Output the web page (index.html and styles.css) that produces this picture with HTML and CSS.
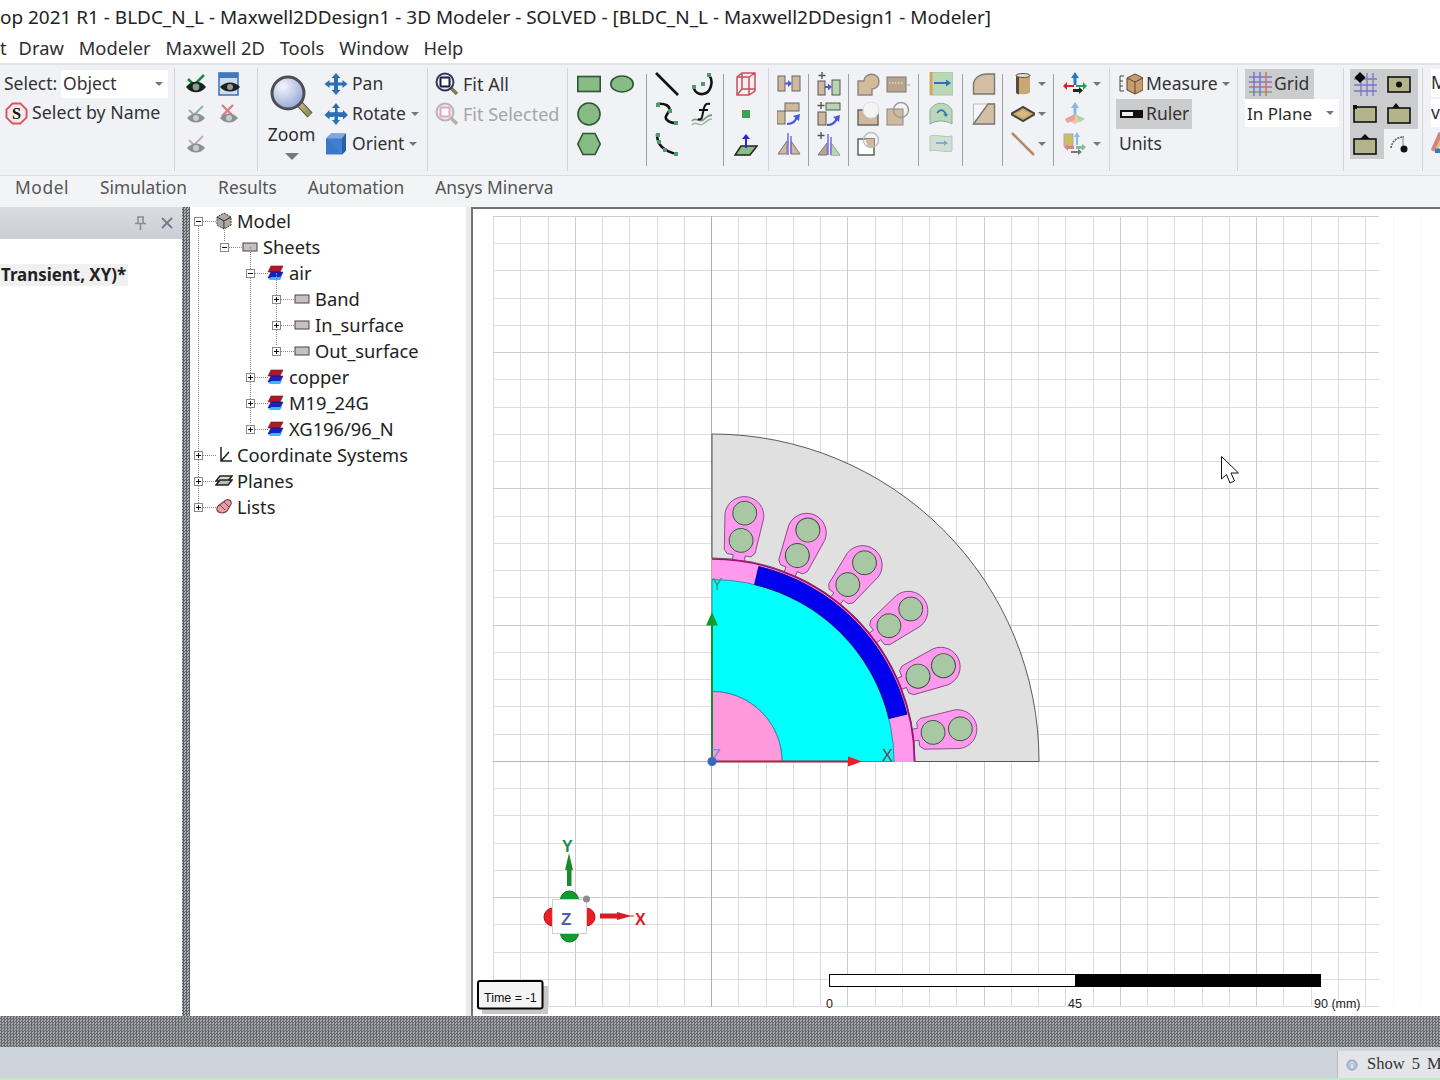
FILE: index.html
```html
<!DOCTYPE html>
<html lang="en">
<head>
<meta charset="utf-8">
<title>Maxwell 2D Modeler</title>
<link rel="stylesheet" href="styles.css">
</head>
<body>
<svg class="defs" width="0" height="0" aria-hidden="true">
  <defs>
    <radialGradient id="lens" cx="35%" cy="30%" r="80%"><stop offset="0" stop-color="#f4f6fc"/><stop offset="1" stop-color="#8f9fd0"/></radialGradient>
    <linearGradient id="gold" x1="0" y1="0" x2="1" y2="1"><stop offset="0" stop-color="#d8d08a"/><stop offset="1" stop-color="#8c8a48"/></linearGradient>
    <symbol id="eye-check" viewBox="0 0 24 24"><path d="M4 7l6 6 10-10" fill="none" stroke="#1f8a45" stroke-width="2.6"/><path d="M2 15c5-7 15-7 20 0-5 7-15 7-20 0z" fill="#16251c"/><circle cx="12" cy="15" r="3.4" fill="#8a9a90"/></symbol>
    <symbol id="eye-check-g" viewBox="0 0 24 24"><path d="M5 8l5 5 9-9" fill="none" stroke="#8cb89a" stroke-width="2"/><path d="M3 16c5-6 13-6 18 0-5 6-13 6-18 0z" fill="#8c9090"/><circle cx="12" cy="16" r="3" fill="#c8cccc"/></symbol>
    <symbol id="eye-check-p" viewBox="0 0 24 24"><path d="M5 8l5 5 9-9" fill="none" stroke="#c8a8c8" stroke-width="2"/><path d="M3 16c5-6 13-6 18 0-5 6-13 6-18 0z" fill="#8c9090"/><circle cx="12" cy="16" r="3" fill="#c8cccc"/></symbol>
    <symbol id="eye-x" viewBox="0 0 24 24"><path d="M5 3l11 11M16 3L5 14" fill="none" stroke="#e07c84" stroke-width="2.4"/><path d="M3 16c5-6 13-6 18 0-5 6-13 6-18 0z" fill="#8c9090"/><circle cx="12" cy="16" r="3" fill="#c8cccc"/></symbol>
    <symbol id="eye-win" viewBox="0 0 24 24"><rect x="2" y="1" width="19" height="22" fill="#d0dcec" stroke="#3f79b8" stroke-width="1.6"/><rect x="2" y="1" width="19" height="5" fill="#3f79b8"/><path d="M3 15c5-6 15-6 20 0-5 6-15 6-20 0z" fill="#1b2120"/><circle cx="13" cy="15" r="3" fill="#999"/></symbol>

    <symbol id="stop-s" viewBox="0 0 24 24"><path d="M8 1.500h8l6.500 6.500v8l-6.500 6.500h-8l-6.500-6.500v-8z" fill="#fbeaea" stroke="#d8545c" stroke-width="2"/><text x="12" y="18" class="s-letter">S</text></symbol>

    <symbol id="pan" viewBox="0 0 24 24"><path d="M12 1l4.500 5H14v4.500h4.500V8l5 4-5 4v-2.500H14V18h2.500L12 23l-4.500-5H10v-4.500H5.500V16l-5-4 5-4v2.500H10V6H7.500z" fill="#2c6fb5"/></symbol>
    <symbol id="rotate" viewBox="0 0 24 24"><path d="M12 1l4 5h-2.500v4c2 .3 4 .6 5.500 0V8l5 5-5 4.500V15c-2 .2-3.500 0-5-.5V18H16l-4 5-4-5h2.500v-3.500c-1.500.5-3 .7-5 .5v2.500l-5-4.500 5-5v2c1.500.6 3.500.3 5.500 0V6H8z" fill="#2c6fb5"/></symbol>
    <symbol id="orient" viewBox="0 0 24 24"><path d="M7 1.500h15v17l-4 4H2v-16z" fill="#3a78c8"/><path d="M2 6.500h16v16" fill="#3f7ed0"/><path d="M7 1.500h15L18 6.500H2z" fill="#7fa9de"/><path d="M22 1.500v17l-4 4v-16z" fill="#2a5fa6"/></symbol>

    <symbol id="fit-all" viewBox="0 0 24 24"><path d="M15 15l7 7" stroke="#7f7d55" stroke-width="3.5"/><circle cx="10" cy="10" r="8.500" fill="#e6e8f2" stroke="#35395a" stroke-width="2"/><rect x="5.500" y="5.500" width="9" height="9" rx="1" fill="#fff" stroke="#1c2040" stroke-width="2"/></symbol>
    <symbol id="fit-sel" viewBox="0 0 24 24"><path d="M15 15l7 7" stroke="#b4b4a4" stroke-width="3.5"/><circle cx="10" cy="10" r="8.500" fill="#ecebf0" stroke="#b6b2c0" stroke-width="2"/><rect x="5.500" y="5.500" width="9" height="9" rx="1" fill="#fff" stroke="#e6a8ac" stroke-width="2"/></symbol>

    <symbol id="s-rect" viewBox="0 0 24 24"><rect x=".8" y="4.500" width="22.400" height="15" fill="#87bd85" stroke="#2d5638" stroke-width="1.600"/></symbol>
    <symbol id="s-ellipse" viewBox="0 0 24 24"><ellipse cx="12" cy="12" rx="11.200" ry="8" fill="#87bd85" stroke="#2d5638" stroke-width="1.600"/></symbol>
    <symbol id="s-circle" viewBox="0 0 24 24"><circle cx="12" cy="12" r="11" fill="#87bd85" stroke="#2d5638" stroke-width="1.600"/></symbol>
    <symbol id="s-hex" viewBox="0 0 24 24"><path d="M6 1.500h12l5.200 10.500L18 22.500H6L.8 12z" fill="#87bd85" stroke="#2d5638" stroke-width="1.600"/></symbol>

    <symbol id="d-line" viewBox="0 0 24 24"><path d="M1 1l22 22" stroke="#111" stroke-width="2.600"/></symbol>
    <symbol id="d-arc" viewBox="0 0 24 24"><path d="M19 3c5 6 2 18-6 19-4 .5-7-1-9-5" fill="none" stroke="#111" stroke-width="2.600"/><rect x="17" y="1" width="4" height="4" fill="#4d9a6a"/><rect x="11" y="10" width="4" height="4" fill="#4d9a6a"/><rect x="2" y="13" width="4" height="4" fill="#4d9a6a"/></symbol>
    <symbol id="d-spline" viewBox="0 0 24 24"><path d="M2 2c8-1 14 2 12 7-2 4-5 6-2 9 2 2 5 3 9 3" fill="none" stroke="#111" stroke-width="2.600"/><rect x="1" y="1" width="4" height="4" fill="#4d9a6a"/><rect x="13" y="7" width="4" height="4" fill="#4d9a6a"/><rect x="19" y="19" width="4" height="4" fill="#4d9a6a"/></symbol>
    <symbol id="d-func" viewBox="0 0 24 24"><path d="M2 19c4-5 7 2 11-1s5-5 9-5" fill="none" stroke="#7a9a86" stroke-width="1.800"/><path d="M2 23c4-5 7 2 11-1s5-5 9-5" fill="none" stroke="#9ab8a6" stroke-width="1.500"/><path d="M20 2c-3-1-5 0-6 4l-2 9c-.5 2-2 3-4 2M9 8h9" fill="none" stroke="#111" stroke-width="2"/></symbol>
    <symbol id="d-curve" viewBox="0 0 24 24"><path d="M2 2c0 8 4 17 20 20" fill="none" stroke="#111" stroke-width="2.600"/><rect x="1" y="1" width="4" height="4" fill="#4d9a6a"/><rect x="2" y="8" width="4" height="4" fill="#4d9a6a"/><rect x="8" y="16" width="4" height="4" fill="#4d9a6a"/><rect x="19" y="20" width="4" height="4" fill="#4d9a6a"/></symbol>

    <symbol id="d-box" viewBox="0 0 24 24"><path d="M8 1h13v18l-6 4H3V5zM3 5h12v18M15 5l6-4M8 1v16L3 23M8 17h13" fill="#f8e8ea" fill-opacity=".4" stroke="#c8505c" stroke-width="1.500"/></symbol>
    <symbol id="d-point" viewBox="0 0 24 24"><rect x="8" y="8" width="8" height="8" fill="#3fa050"/></symbol>
    <symbol id="d-plane" viewBox="0 0 24 24"><path d="M7 14h16l-7 9H1z" fill="#87bd85" stroke="#222" stroke-width="1.500"/><path d="M12 16V5" stroke="#2a2ad0" stroke-width="2"/><path d="M8 7l4-5 4 5z" fill="#2a2ad0"/></symbol>

    <symbol id="o-move" viewBox="0 0 24 24"><rect x="1" y="4" width="7" height="15" fill="#cfb99c" stroke="#666"/><rect x="15" y="4" width="8" height="15" fill="#cfb99c" stroke="#666"/><path d="M8 10.500h3V8l4 3.500L11 15v-2.500H8z" fill="#4a58dc"/></symbol>
    <symbol id="o-rot" viewBox="0 0 24 24"><rect x="0" y="9" width="8" height="13" fill="#cfb99c" stroke="#666"/><rect x="8" y="1" width="14" height="8" fill="#cfb99c" stroke="#666"/><path d="M10 22c6 0 9-3 10-8" fill="none" stroke="#4a58dc" stroke-width="2.200"/><path d="M16 14l7-2-1 7z" fill="#4a58dc"/></symbol>
    <symbol id="o-mir" viewBox="0 0 24 24"><path d="M10 22H1l9-13zM14 22h9l-9-13z" fill="#cfb99c" stroke="#777"/><path d="M11 1v22M14 4v18" stroke="#7d6ce0" stroke-width="1.500"/></symbol>
    <symbol id="o-move2" viewBox="0 0 24 24"><path d="M5 0v7M1.500 3.500h7" stroke="#555" stroke-width="1.400"/><rect x="1" y="9" width="7" height="14" fill="#cfb99c" stroke="#555"/><rect x="15" y="8" width="8" height="15" fill="#b5d6b0" stroke="#555"/><path d="M8 14h3v-2.500l4 3.500-4 3.500V16H8z" fill="#4a58dc"/></symbol>
    <symbol id="o-rot2" viewBox="0 0 24 24"><path d="M4 0v7M.500 3.500h7" stroke="#555" stroke-width="1.400"/><rect x="1" y="10" width="8" height="13" fill="#cfb99c" stroke="#555"/><rect x="9" y="1" width="14" height="7" fill="#b5d6b0" stroke="#555"/><path d="M10 23c6 0 9-3 10-8" fill="none" stroke="#4a58dc" stroke-width="2.200"/><path d="M16 15l7-2-1 7z" fill="#4a58dc"/></symbol>
    <symbol id="o-mir2" viewBox="0 0 24 24"><path d="M4 0v7M.500 3.500h7" stroke="#555" stroke-width="1.400"/><path d="M10 23H1l9-12zM14 23h9l-9-12z" fill="#b5a995" stroke="#777"/><path d="M14 23h9l-9-12z" fill="#b5d6b0"/><path d="M11 2v21M14 5v18" stroke="#7d6ce0" stroke-width="1.500"/></symbol>

    <symbol id="b-union" viewBox="0 0 24 24"><path d="M2 9h6c0-9 15-9 15 0 0 5-3 8-7 8v6H2z" fill="#d4b99a" stroke="#888" stroke-width="1.400"/></symbol>
    <symbol id="b-imprint" viewBox="0 0 24 24"><rect x="1" y="5" width="19" height="15" fill="#b8a48c" stroke="#777"/><path d="M3 11h15" stroke="#eee" stroke-dasharray="1.500 1.500"/><path d="M20 13h4" stroke="#aaa"/></symbol>
    <symbol id="b-sub" viewBox="0 0 24 24"><path d="M2 8h20v15H2z" fill="#cfb99c" stroke="#666" stroke-width="1.400"/><circle cx="15" cy="8" r="8" fill="#f4f4f4" stroke="#ddd"/></symbol>
    <symbol id="b-int" viewBox="0 0 24 24"><rect x="1" y="7" width="16" height="16" fill="#cfb99c" stroke="#888"/><circle cx="15" cy="8" r="7.500" fill="none" stroke="#999" stroke-width="1.400"/></symbol>
    <symbol id="b-int2" viewBox="0 0 24 24"><rect x="2" y="7" width="16" height="16" fill="#fff" stroke="#555" stroke-width="1.400"/><path d="M9 7h9v8h-6z" fill="#cfb99c"/><circle cx="15" cy="8" r="7.500" fill="none" stroke="#bbb" stroke-width="1.400"/></symbol>

    <symbol id="t-flat" viewBox="0 0 24 24"><rect x="1" y="0" width="23" height="23" fill="#b9d8b5" stroke="#a8c0a8"/><rect x="1" y="0" width="2.500" height="23" fill="#e29c5c"/><path d="M5 11h13" stroke="#2e6ec0" stroke-width="2"/><path d="M17 7.500l5 3.500-5 3.500z" fill="#2e6ec0"/></symbol>
    <symbol id="t-arch" viewBox="0 0 24 24"><path d="M1 22V8c5-9 17-9 22 0v14c-6-4-16-4-22 0z" fill="#b9d8b5" stroke="#8aa8a0"/><path d="M8 11c3-4 6-4 9 1" fill="none" stroke="#3e6ec0" stroke-width="1.600"/><path d="M14 12h5l-2 3z" fill="#3e6ec0"/></symbol>
    <symbol id="t-wave" viewBox="0 0 24 24"><path d="M1 4c7-2 15 2 22 0v15c-7 2-15-2-22 0z" fill="#cfe0d0" stroke="#b4c4c4"/><path d="M7 11h9" stroke="#7f9fd0" stroke-width="1.600"/><path d="M15 8.500l4 2.500-4 2.500z" fill="#7f9fd0"/></symbol>

    <symbol id="f-fillet" viewBox="0 0 24 24"><path d="M1.500 22V12C2 6 8 2 14 2h8.500v20z" fill="#d4bfa4" stroke="#777" stroke-width="1.400"/></symbol>
    <symbol id="f-chamfer" viewBox="0 0 24 24"><rect x="1.500" y="2" width="21" height="20" fill="#f6f6f6" stroke="#bbb"/><path d="M1.500 22L16 2h6.500v20z" fill="#d4bfa4" stroke="#777" stroke-width="1.400"/></symbol>

    <symbol id="c-cyl" viewBox="0 0 24 24"><path d="M5 3v17c0 3 14 3 14 0V3z" fill="#c9a878"/><path d="M5 3v17c0 1.500 2 2.500 3 2.500V3z" fill="#5a4a38"/><ellipse cx="12" cy="3.500" rx="7" ry="2" fill="#e8dcc4" stroke="#555"/></symbol>
    <symbol id="c-dia" viewBox="0 0 24 24"><path d="M0 12l12-7 12 7-12 7z" fill="#c8a860" stroke="#444" stroke-width="2"/><path d="M5 12l7-4 7 4-7 4z" fill="#d8b880"/></symbol>
    <symbol id="c-line" viewBox="0 0 24 24"><path d="M1 1l22 22" stroke="#b08c70" stroke-width="2.600"/></symbol>

    <symbol id="a-tri" viewBox="0 0 24 24"><path d="M12 0l4 6h-2.500v7h-3V6H8z" fill="#2c78c8"/><path d="M11 13H4V10L0 14l4 4v-3h7z" fill="#d8202c"/><path d="M13 13h7v-3l4 4-4 4v-3h-7z" fill="#20a050"/><path d="M10 17h6v-2l4 3.500-4 3.500v-2h-6z" fill="#222"/></symbol>
    <symbol id="a-tri2" viewBox="0 0 24 24"><path d="M12 0l4 6h-2.500v9h-3V6H8z" fill="#8cb8e8"/><path d="M2 17l10-5 10 5-10 5z" fill="#e8c8a8"/><path d="M2 17l10-5v6l-8 3z" fill="#e8a0a0"/><path d="M12 12l10 5-5 3z" fill="#a8d8a8"/></symbol>
    <symbol id="a-tri3" viewBox="0 0 24 24"><rect x="1" y="2" width="9" height="12" fill="#c8c060" stroke="#aaa"/><path d="M14 0l3 5h-2v8h-2V5h-2z" fill="#8cb8e8"/><path d="M11 14H5v-2l-4 3 4 4v-2h6z" fill="#e08088"/><path d="M13 14h6v-2l4 3-4 4v-2h-6z" fill="#80c098"/><path d="M8 19h7v-2l4 3-4 3v-2H8z" fill="#777"/></symbol>

    <symbol id="m-box" viewBox="0 0 24 24"><path d="M8 6l8-4 8 4v12l-8 4-8-4z" fill="#c89c6c" stroke="#5a4430"/><path d="M8 6l8 4 8-4M16 10v12" fill="none" stroke="#5a4430"/><path d="M1 4h4M1 9h3M1 14h3M1 19h4M1 4v15" stroke="#444" fill="none"/></symbol>
    <symbol id="m-ruler" viewBox="0 0 24 24"><rect x="1" y="8" width="23" height="8" fill="#111"/><rect x="3" y="10" width="11" height="4" fill="#eee"/></symbol>
    <symbol id="g-grid" viewBox="0 0 24 24"><path d="M1 5h23M1 10h23" stroke="#7a74d0" stroke-width="1.500"/><path d="M1 15h23" stroke="#c06a8a" stroke-width="1.500"/><path d="M1 20h23" stroke="#72a878" stroke-width="1.500"/><path d="M6 0v24M12 0v24" stroke="#7a74d0" stroke-width="1.500"/><path d="M18 0v24" stroke="#d07060" stroke-width="1.500"/></symbol>
    <symbol id="g-snap" viewBox="0 0 24 24"><path d="M1 7h23M1 13h23M1 19h23M8 1v23M14 1v23M20 1v23" stroke="#7a74c8" stroke-width="1.300"/><path d="M7 0l5.500 5.500L7 11 1.500 5.500z" fill="#000"/></symbol>
    <symbol id="k-dot" viewBox="0 0 24 24"><rect x="1" y="5" width="22" height="15" fill="#b4b48c" stroke="#111" stroke-width="1.600"/><circle cx="12" cy="12.500" r="3" fill="#111"/></symbol>
    <symbol id="k-tl" viewBox="0 0 24 24"><rect x="1" y="5" width="22" height="15" fill="#b4b48c" stroke="#111" stroke-width="1.600"/><rect x="0" y="3" width="4" height="4" fill="#111"/></symbol>
    <symbol id="k-tm" viewBox="0 0 24 24"><rect x="1" y="6" width="22" height="15" fill="#b4b48c" stroke="#111" stroke-width="1.600"/><path d="M5 6l4-5 4 5z" fill="#111"/></symbol>
    <symbol id="k-tc" viewBox="0 0 24 24"><rect x="1" y="7" width="22" height="15" fill="#b4b48c" stroke="#111" stroke-width="1.600"/><path d="M7 7l5-5 5 5z" fill="#111"/></symbol>
    <symbol id="k-arc" viewBox="0 0 24 24"><path d="M4 16C5 9 10 5 17 5" fill="none" stroke="#555" stroke-width="1.500" stroke-dasharray="2 1"/><path d="M16 4v12" stroke="#888"/><circle cx="17" cy="17" r="3.500" fill="#111"/></symbol>
    <symbol id="k-rain" viewBox="0 0 24 24"><path d="M2 22L10 4" stroke="#d88080" stroke-width="5"/><path d="M4 23L13 6" stroke="#e0c070" stroke-width="3"/><path d="M4 22h20" stroke="#3a78c8" stroke-width="5"/></symbol>

    <symbol id="n-model" viewBox="0 0 18 18"><path d="M9 1l7 4v8l-7 4-7-4V5z" fill="#b0aaa6" stroke="#333" stroke-dasharray="2 1"/><path d="M2 5l7 4 7-4M9 9v8" stroke="#222" fill="none"/></symbol>
    <symbol id="n-sheet" viewBox="0 0 18 18"><rect x="2" y="5" width="14" height="8" fill="#c8c0c0" stroke="#444"/></symbol>
    <symbol id="n-mat" viewBox="0 0 18 18"><path d="M4 2h12l-3 6H1z" fill="#b01828" stroke="#701020" stroke-width=".6"/><path d="M4 8h12l-3 6H1z" fill="#1c20c0" stroke="#101070" stroke-width=".6"/><path d="M4 13h11l-2 3H2z" fill="#30c0f0"/></symbol>
    <symbol id="n-cs" viewBox="0 0 18 18"><path d="M6 1v14h11M6 15L14 6" fill="none" stroke="#222" stroke-width="1.500"/></symbol>
    <symbol id="n-plane" viewBox="0 0 18 18"><path d="M5 4h12l-4 5H1z" fill="#ddd" stroke="#222" stroke-width="1.500"/><path d="M5 8h12l-4 5H1z" fill="#bbb" stroke="#222" stroke-width="1.500"/></symbol>
    <symbol id="n-list" viewBox="0 0 18 18"><path d="M11 2c3-1 6 1 5 4l-4 7c-3 3-9 2-10-1-.5-2 .5-3 1-4z" fill="#e2a0a8" stroke="#8a4048" stroke-width="1.200"/><path d="M5 7l5 5M9 4l5 5" stroke="#8a4048"/></symbol>

    <g id="slot">
      <path d="M203 -6L208 -6L208 -12L212 -15.500L247.500 -19.500A19.500 19.500 0 0 1 247.500 19.500L212 15.500L208 12L208 6L203 6Z" fill="#ff99ee" stroke="#7a3a80" stroke-width=".8"/>
      <circle cx="223" cy="0" r="12" fill="#a8c8a4" stroke="#3c4a44" stroke-width=".9"/>
      <circle cx="250.500" cy="0" r="12" fill="#a8c8a4" stroke="#3c4a44" stroke-width=".9"/>
    </g>
  </defs>
</svg>

<header class="titlebar"><span class="title-text">op 2021 R1 - BLDC_N_L - Maxwell2DDesign1 - 3D Modeler - SOLVED - [BLDC_N_L - Maxwell2DDesign1 - Modeler]</span></header>
<nav class="menubar"><span class="menu-first">t</span><span>Draw</span><span>Modeler</span><span>Maxwell 2D</span><span>Tools</span><span>Window</span><span>Help</span></nav>

<section class="ribbon">
  <div class="grp g1">
    <div class="cmd"><span class="sel-label">Select:</span><div class="combo c-object">Object<b class="caret"></b></div></div>
    <div class="cmd by-name"><svg class="ic ic22"><use href="#stop-s"/></svg>Select by Name</div>
  </div>
  <i class="sep"></i>
  <div class="grp g2 icons c2">
    <svg class="ic"><use href="#eye-check"/></svg><svg class="ic"><use href="#eye-win"/></svg>
    <svg class="ic"><use href="#eye-check-g"/></svg><svg class="ic"><use href="#eye-x"/></svg>
    <svg class="ic"><use href="#eye-check-p"/></svg>
  </div>
  <i class="sep"></i>
  <div class="grp g3">
    <div class="zoom">
      <svg class="zoom-ic" viewBox="0 0 46 50"><path d="M26 27l15 16" stroke="#555" stroke-width="7"/><path d="M26 27l15 16" stroke="url(#gold)" stroke-width="5"/><circle cx="19" cy="21" r="16" fill="url(#lens)" stroke="#4a4e58" stroke-width="3"/></svg>
      <span>Zoom</span><b class="caret big"></b>
    </div>
    <div class="stack">
      <div class="cmd"><svg class="ic"><use href="#pan"/></svg>Pan</div>
      <div class="cmd"><svg class="ic"><use href="#rotate"/></svg>Rotate<b class="caret tight"></b></div>
      <div class="cmd"><svg class="ic"><use href="#orient"/></svg>Orient<b class="caret tight"></b></div>
    </div>
  </div>
  <i class="sep"></i>
  <div class="grp g4 stack">
    <div class="cmd"><svg class="ic"><use href="#fit-all"/></svg>Fit All</div>
    <div class="cmd dim"><svg class="ic"><use href="#fit-sel"/></svg>Fit Selected</div>
  </div>
  <i class="sep"></i>
  <div class="grp g5 icons c2">
    <svg class="ic"><use href="#s-rect"/></svg><svg class="ic"><use href="#s-ellipse"/></svg>
    <svg class="ic"><use href="#s-circle"/></svg><i></i>
    <svg class="ic"><use href="#s-hex"/></svg>
  </div>
  <i class="sep dark"></i>
  <div class="grp g6 icons c2">
    <svg class="ic"><use href="#d-line"/></svg><svg class="ic"><use href="#d-arc"/></svg>
    <svg class="ic"><use href="#d-spline"/></svg><svg class="ic"><use href="#d-func"/></svg>
    <svg class="ic"><use href="#d-curve"/></svg>
  </div>
  <i class="sep dark"></i>
  <div class="grp g7 icons">
    <svg class="ic"><use href="#d-box"/></svg><svg class="ic"><use href="#d-point"/></svg><svg class="ic"><use href="#d-plane"/></svg>
  </div>
  <i class="sep"></i>
  <div class="grp g8 icons">
    <svg class="ic"><use href="#o-move"/></svg><svg class="ic"><use href="#o-rot"/></svg><svg class="ic"><use href="#o-mir"/></svg>
  </div>
  <i class="sep dark"></i>
  <div class="grp g8 icons">
    <svg class="ic"><use href="#o-move2"/></svg><svg class="ic"><use href="#o-rot2"/></svg><svg class="ic"><use href="#o-mir2"/></svg>
  </div>
  <i class="sep dark"></i>
  <div class="grp g10 icons c2">
    <svg class="ic"><use href="#b-union"/></svg><svg class="ic"><use href="#b-imprint"/></svg>
    <svg class="ic"><use href="#b-sub"/></svg><svg class="ic"><use href="#b-int"/></svg>
    <svg class="ic"><use href="#b-int2"/></svg>
  </div>
  <i class="sep dark"></i>
  <div class="grp g11 icons">
    <svg class="ic"><use href="#t-flat"/></svg><svg class="ic"><use href="#t-arch"/></svg><svg class="ic"><use href="#t-wave"/></svg>
  </div>
  <i class="sep dark"></i>
  <div class="grp g12 icons">
    <svg class="ic"><use href="#f-fillet"/></svg><svg class="ic"><use href="#f-chamfer"/></svg>
  </div>
  <i class="sep dark"></i>
  <div class="grp g13 stack">
    <div class="cmd"><svg class="ic"><use href="#c-cyl"/></svg><b class="caret"></b></div>
    <div class="cmd"><svg class="ic"><use href="#c-dia"/></svg><b class="caret"></b></div>
    <div class="cmd"><svg class="ic"><use href="#c-line"/></svg><b class="caret"></b></div>
  </div>
  <i class="sep dark"></i>
  <div class="grp g14 stack">
    <div class="cmd"><svg class="ic"><use href="#a-tri"/></svg><b class="caret"></b></div>
    <div class="cmd"><svg class="ic"><use href="#a-tri2"/></svg></div>
    <div class="cmd"><svg class="ic"><use href="#a-tri3"/></svg><b class="caret"></b></div>
  </div>
  <i class="sep"></i>
  <div class="grp g15 stack">
    <div class="cmd"><svg class="ic"><use href="#m-box"/></svg>Measure<b class="caret tight"></b></div>
    <div class="cmd on ruler"><svg class="ic"><use href="#m-ruler"/></svg>Ruler</div>
    <div class="cmd units">Units</div>
  </div>
  <i class="sep"></i>
  <div class="grp g16 stack">
    <div class="cmd on grid-btn"><svg class="ic"><use href="#g-grid"/></svg>Grid</div>
    <div class="combo c-plane">In Plane<b class="caret"></b></div>
  </div>
  <i class="sep"></i>
  <div class="grp g17 icons c2">
    <span class="cell on"><svg class="ic"><use href="#g-snap"/></svg></span><span class="cell on"><svg class="ic"><use href="#k-dot"/></svg></span>
    <span class="cell on"><svg class="ic"><use href="#k-tl"/></svg></span><span class="cell on"><svg class="ic"><use href="#k-tm"/></svg></span>
    <span class="cell on"><svg class="ic"><use href="#k-tc"/></svg></span><span class="cell"><svg class="ic"><use href="#k-arc"/></svg></span>
  </div>
  <i class="sep"></i>
  <div class="grp g18">
    <div class="combo c-cut">M</div>
    <div class="combo c-cut">v</div>
    <svg class="ic"><use href="#k-rain"/></svg>
  </div>
</section>

<nav class="tabs"><span class="tab-first">Model</span><span>Simulation</span><span>Results</span><span>Automation</span><span>Ansys Minerva</span></nav>

<main class="work">
  <aside class="left">
    <div class="left-head">
      <svg class="pin" viewBox="0 0 14 14"><path d="M4 1h7M5 1v6M10 1v6M2 7.500h11M7.500 8v6" fill="none" stroke="#8a8f96" stroke-width="1.600"/></svg>
      <svg class="close" viewBox="0 0 14 14"><path d="M2 2l10 10M12 2L2 12" fill="none" stroke="#777c84" stroke-width="1.800"/></svg>
    </div>
    <div class="left-body"><span class="doc">Transient, XY)*</span></div>
  </aside>
  <div class="sash"></div>
  <div class="tree">
    <i class="vl vl0"></i><i class="vl vl1"></i><i class="vl vl2"></i><i class="vl vl3"></i>
    <div class="row l0"><b class="exp open"></b><i class="dash"></i><svg class="ni"><use href="#n-model"/></svg>Model</div>
    <div class="row l1"><b class="exp open"></b><i class="dash"></i><svg class="ni"><use href="#n-sheet"/></svg>Sheets</div>
    <div class="row l2"><b class="exp open"></b><i class="dash"></i><svg class="ni"><use href="#n-mat"/></svg>air</div>
    <div class="row l3"><b class="exp"></b><i class="dash"></i><svg class="ni"><use href="#n-sheet"/></svg>Band</div>
    <div class="row l3"><b class="exp"></b><i class="dash"></i><svg class="ni"><use href="#n-sheet"/></svg>In_surface</div>
    <div class="row l3"><b class="exp"></b><i class="dash"></i><svg class="ni"><use href="#n-sheet"/></svg>Out_surface</div>
    <div class="row l2"><b class="exp"></b><i class="dash"></i><svg class="ni"><use href="#n-mat"/></svg>copper</div>
    <div class="row l2"><b class="exp"></b><i class="dash"></i><svg class="ni"><use href="#n-mat"/></svg>M19_24G</div>
    <div class="row l2"><b class="exp"></b><i class="dash"></i><svg class="ni"><use href="#n-mat"/></svg>XG196/96_N</div>
    <div class="row l0"><b class="exp"></b><i class="dash"></i><svg class="ni"><use href="#n-cs"/></svg>Coordinate Systems</div>
    <div class="row l0"><b class="exp"></b><i class="dash"></i><svg class="ni"><use href="#n-plane"/></svg>Planes</div>
    <div class="row l0"><b class="exp"></b><i class="dash"></i><svg class="ni"><use href="#n-list"/></svg>Lists</div>
  </div>
  <div class="sash2"></div>
  <div class="view">
    <svg class="canvas" viewBox="471 207 969 809" width="969" height="809">
      <path class="grid-faint" d="M1393.500 216V1006M1420.500 216V1006"/>
      <path class="grid-minor" d="M493.500 216V1007M520.500 216V1007M548.500 216V1007M602.500 216V1007M629.500 216V1007M657.500 216V1007M684.500 216V1007M738.500 216V1007M766.500 216V1007M793.500 216V1007M820.500 216V1007M875.500 216V1007M902.500 216V1007M929.500 216V1007M956.500 216V1007M1011.500 216V1007M1038.500 216V1007M1065.500 216V1007M1093.500 216V1007M1147.500 216V1007M1174.500 216V1007M1202.500 216V1007M1229.500 216V1007M1283.500 216V1007M1311.500 216V1007M1338.500 216V1007M1365.500 216V1007
        M493 243.500H1379M493 270.500H1379M493 298.500H1379M493 325.500H1379M493 379.500H1379M493 407.500H1379M493 434.500H1379M493 461.500H1379M493 516.500H1379M493 543.500H1379M493 570.500H1379M493 597.500H1379M493 652.500H1379M493 679.500H1379M493 706.500H1379M493 734.500H1379M493 788.500H1379M493 815.500H1379M493 843.500H1379M493 870.500H1379M493 924.500H1379M493 952.500H1379M493 979.500H1379M493 1006.500H1379"/>
      <path class="grid-major" d="M575.500 216V1007M847.500 216V1007M984.500 216V1007M1120.500 216V1007M1256.500 216V1007M493 216.500H1379M493 352.500H1379M493 488.500H1379M493 625.500H1379M493 897.500H1379"/>
      <path class="grid-y" d="M711.500 216V1007"/>
      <path class="grid-x" d="M493 761.500H1379"/>

      <path class="stator" d="M712 434A327 327 0 0 1 1039 761.500L915 761.500A203 203 0 0 0 712 558Z"/>
      <g transform="translate(712 761.500)">
        <use href="#slot" transform="rotate(-7.500)"/>
        <use href="#slot" transform="rotate(-22.500)"/>
        <use href="#slot" transform="rotate(-37.500)"/>
        <use href="#slot" transform="rotate(-52.500)"/>
        <use href="#slot" transform="rotate(-67.500)"/>
        <use href="#slot" transform="rotate(-82.500)"/>
      </g>
      <path class="ring" d="M712 761.500V559A202.500 202.500 0 0 1 914.500 761.500Z"/>
      <path class="gap" d="M712 559A202.500 202.500 0 0 1 914.500 761.500"/>
      <path class="core" d="M782 761.500L894 761.500A182 182 0 0 0 712 579.500L712 691.500A70 70 0 0 1 782 761.500Z"/>
      <path class="shaft" d="M712 761.500L782 761.500A70 70 0 0 0 712 691.500Z"/>
      <path class="magnet" d="M889 718.500L907 714.200A200.500 200.500 0 0 0 758.800 566.500L754.500 584.500A182 182 0 0 1 889 718.500Z"/>

      <path class="ax-y" d="M712 761V624"/>
      <path class="ax-y-h" d="M712 612L706 625.500H718Z"/>
      <path class="ax-x" d="M712 761.500H850"/>
      <path class="ax-x-h" d="M848 756.500L862 761.500L848 766.500Z"/>
      <text class="lab lab-y" x="712" y="590">Y</text>
      <text class="lab lab-x" x="882" y="761">X</text>
      <text class="lab lab-z" x="711" y="761">Z</text>
      <circle class="origin" cx="712" cy="761.500" r="4.500"/>

      <circle class="tr-r" cx="553" cy="917" r="9"/><circle class="tr-r" cx="586" cy="917" r="9"/>
      <circle class="tr-g" cx="569.500" cy="900" r="9"/><circle class="tr-g" cx="569.500" cy="933" r="9"/>
      <rect class="tr-box" x="552.500" y="899.500" width="34" height="34"/>
      <circle class="tr-dot" cx="586.500" cy="899" r="3.500"/>
      <text class="tr-z" x="561" y="925">Z</text>
      <path class="tr-yarrow" d="M567 886V870H565L569 853L573 870H571.500V886Z"/>
      <text class="tr-y" x="562" y="852">Y</text>
      <path class="tr-xarrow" d="M600 913.500H617V912L630 915.500H634V916.500H630L617 920V918.500H600Z"/>
      <text class="tr-x" x="635" y="925">X</text>

      <rect class="time-sh" x="482" y="986" width="66" height="28"/>
      <rect class="time" x="478" y="981" width="64.500" height="27.500" rx="2"/>
      <text class="time-t" x="484" y="1002">Time = -1</text>

      <rect class="sc-w" x="829.500" y="974.500" width="246" height="12"/>
      <rect class="sc-b" x="1075" y="974" width="246" height="13"/>
      <text class="sc-t" x="826" y="1008">0</text>
      <text class="sc-t" x="1068" y="1008">45</text>
      <text class="sc-t" x="1314" y="1008">90 (mm)</text>

      <path class="cursor" d="M1221.500 456.500V479L1226.500 474.500L1230 483L1234.500 481L1231 473H1238.500Z"/>
    </svg>
  </div>
</main>

<div class="hatch"></div>
<footer class="status">
  <div class="show"><svg class="info" viewBox="0 0 12 12"><circle cx="6" cy="6" r="5" fill="#b4c4dc" stroke="#8a9ab8"/><path d="M6 3v1M6 5.500V9" stroke="#fff" stroke-width="1.400"/></svg><span>Show 5 M</span></div>
</footer>
</body>
</html>
```

FILE: styles.css
```css
* { box-sizing: border-box; }
html, body { margin: 0; padding: 0; }
body {
  width: 1440px;
  height: 1080px;
  overflow: hidden;
  background: #fff;
  color: #2b2b2b;
  font-family: "Noto Sans", "Liberation Sans", sans-serif;
  font-size: 17.5px;
  line-height: 1;
}
.defs { position: absolute; }
.s-letter { font: bold 17px "Liberation Serif", serif; text-anchor: middle; fill: #111; }

.titlebar { height: 32px; padding-top: 8px; white-space: nowrap; overflow: hidden; color: #222; font-size: 18.95px; }
.menubar { height: 33px; display: flex; gap: 15px; padding-top: 7px; color: #2e2e2e; font-size: 18.3px; border-bottom: 2px solid #e2e3e6; }
.menu-first { margin-right: -3px; }

.ribbon { height: 111px; padding-top: 4px; display: flex; background: #f1f2f5; border-bottom: 1px solid #dcdde0; }
.grp { flex: none; }
.sep { flex: none; width: 1px; margin: -1px 0 4px; background: #d4d5d8; }
.sep.dark { margin: 5px 0 9px; background: #9c9ea3; }

.cmd { height: 30px; display: flex; align-items: center; gap: 4px; white-space: nowrap; color: #333; }
.dim { color: #a3a5a9; }
.ic { width: 24px; height: 24px; flex: none; display: block; }
.ic22 { width: 23px; height: 23px; }
.caret { display: inline-block; width: 0; height: 0; border-left: 4px solid transparent; border-right: 4px solid transparent; border-top: 4px solid #777; }
.caret.tight { margin-left: 1px; }
.caret.big { border-left-width: 7px; border-right-width: 7px; border-top-width: 7px; margin-top: 9px; }

.combo { background: #fff; display: flex; align-items: center; justify-content: space-between; white-space: nowrap; overflow: hidden; }

.g1 { width: 174px; padding-left: 4px; }
.sel-label { width: 54px; }
.c-object { width: 107px; height: 28px; padding: 0 5px 0 2px; margin-left: -1px; }
.by-name { padding-left: 1px; gap: 4px; font-size: 17.8px; margin-top: -1px; }

.icons { display: grid; grid-template-rows: repeat(3, 30px); grid-auto-rows: 30px; grid-template-columns: 1fr; justify-items: center; align-items: center; align-content: start; }
.icons.c2 { grid-template-columns: 33px 33px; }

.g2 { width: 82px; padding-left: 4px; }
.g3 { width: 169px; display: flex; }
.zoom { width: 66px; padding-left: 1px; display: flex; flex-direction: column; align-items: center; }
.zoom-ic { width: 46px; height: 50px; margin: 3px 0 0 0; display: block; }
.zoom span { margin-top: 4px; }
.stack { display: flex; flex-direction: column; }
.g4 { width: 139px; padding-left: 7px; font-size: 18px; }
.g5 { width: 78px; padding-left: 4px; }
.g6 { width: 76px; padding-left: 2px; }
.g6.c2 { grid-template-columns: 35px 35px; }
.g7 { width: 44px; }
.g8 { width: 39px; }
.g10 { width: 69px; padding-left: 4px; }
.g10.c2 { grid-template-columns: 30px 30px; }
.g11 { width: 43px; }
.g12 { width: 39px; padding-left: 2px; }
.g13 { width: 50px; padding-left: 8px; }
.g13 .cmd { gap: 3px; }
.g14 { width: 55px; padding-left: 9px; }
.g14 .cmd { gap: 6px; }
.g15 { width: 127px; padding-left: 9px; }
.g15 .cmd { gap: 3px; }
.on { background: #cbcccd; }
.ruler { width: 76px; margin-left: -3px; padding-left: 3px; }
.units { padding-left: 0; }
.g16 { width: 105px; padding-left: 7px; }
.grid-btn { width: 69px; gap: 2px; padding-left: 3px; }
.c-plane { width: 94px; height: 28px; padding: 0 5px 0 2px; font-size: 17px; }
.g17 { width: 78px; padding-left: 6px; }
.g17.c2 { grid-template-columns: 34px 34px; }
.cell { width: 34px; height: 30px; padding-right: 4px; display: flex; align-items: center; justify-content: center; }
.g18 { width: 17px; padding-left: 8px; }
.c-cut { width: 20px; height: 28px; margin-bottom: 2px; }

.tabs { height: 31px; display: flex; gap: 31px; padding: 0 0 8px 15px; background: #f3f4f6; color: #555; font-size: 17.35px; align-items: center; }
.tab-first { width: 54px; letter-spacing: .6px; }

.work { height: 809px; display: flex; background: #fff; }
.left { width: 182px; display: flex; flex-direction: column; }
.left-head { height: 32px; display: flex; justify-content: flex-end; align-items: center; gap: 13px; padding-right: 8px; background: linear-gradient(#d9dce1, #cbced4); }
.pin, .close { width: 14px; height: 14px; display: block; }
.left-body { flex: 1; padding-top: 25px; }
.doc { display: block; width: 128px; height: 22px; padding: 1px 0 0 1px; background: #f0f0f0; font-weight: 700; font-size: 16.9px; color: #222; line-height: 20px; white-space: nowrap; overflow: hidden; }
.sash { width: 8px; background: repeating-conic-gradient(#5c6066 0 25%, #b0b2b6 0 50%) 0 0 / 3px 3px; }
.sash2 { width: 5px; background: #e9e9ea; }

.tree { position: relative; width: 276px; padding-top: 1px; background: #fff; color: #222; font-size: 18.3px; }
.row { height: 26px; display: flex; align-items: center; white-space: nowrap; }
.l0 { padding-left: 4px; }
.l1 { padding-left: 30px; }
.l2 { padding-left: 56px; }
.l3 { padding-left: 82px; }
.exp { position: relative; flex: none; width: 9px; height: 9px; border: 1px solid #8a8a8a; background: #fff; }
.exp::before { content: ""; position: absolute; left: 1px; top: 3px; width: 5px; height: 1px; background: #111; }
.exp::after { content: ""; position: absolute; left: 3px; top: 1px; width: 1px; height: 5px; background: #111; }
.exp.open::after { display: none; }
.dash { flex: none; width: 13px; height: 0; margin-right: -1px; border-top: 1px dotted #888; }
.ni { flex: none; width: 18px; height: 18px; margin: 0 4px 0 0; display: block; }
.vl { position: absolute; width: 0; border-left: 1px dotted #888; }
.vl0 { left: 8px; top: 14px; height: 286px; }
.vl1 { left: 34px; top: 14px; height: 20px; }
.vl2 { left: 60px; top: 40px; height: 176px; }
.vl3 { left: 86px; top: 66px; height: 72px; }

.view { flex: 1; min-width: 0; background: #fff; border-left: 2px solid #6f7276; border-top: 2px solid #6f7276; overflow: hidden; }
.canvas { display: block; margin: -2px 0 0 -2px; }
.grid-faint { stroke: #f9f9f9; fill: none; }
.grid-minor { stroke: #dcdcdc; fill: none; }
.grid-major { stroke: #cdcdcd; fill: none; }
.grid-y { stroke: #c4a6a6; fill: none; }
.grid-x { stroke: #a9c0a9; fill: none; }
.stator { fill: #e0e0e0; stroke: #4a4a4a; stroke-width: .9; }
.ring { fill: #ff99ee; stroke: none; }
.gap { fill: none; stroke: #a00c78; stroke-width: 1.600; }
.core { fill: #00ffff; stroke: #2a7a90; stroke-width: .8; }
.shaft { fill: #ff99dd; stroke: #2a7a90; stroke-width: .8; }
.magnet { fill: #0000ee; stroke: #00007a; stroke-width: .8; }
.ax-y { stroke: #1c8a34; stroke-width: 2; fill: none; }
.ax-y-h { fill: #149a2a; }
.ax-x { stroke: #a02838; stroke-width: 2; fill: none; }
.ax-x-h { fill: #ee1c24; }
.lab { font: 16px "Liberation Sans", sans-serif; }
.lab-y { fill: #2fa078; }
.lab-x { fill: #7a3c3c; }
.lab-z { fill: #7a8ad8; }
.origin { fill: #3a68c0; }
.tr-r { fill: #ee1c24; stroke: #b01018; }
.tr-g { fill: #149a2a; stroke: #107020; }
.tr-box { fill: #fff; stroke: #d0d0d0; }
.tr-dot { fill: #8c8c90; }
.tr-z { font: bold 17px "Liberation Sans", sans-serif; fill: #4a64a8; }
.tr-yarrow { fill: #1a8a2a; }
.tr-y { font: bold 16px "Liberation Sans", sans-serif; fill: #1a8a4a; }
.tr-xarrow { fill: #d81c24; }
.tr-x { font: bold 16px "Liberation Sans", sans-serif; fill: #d81c24; }
.time-sh { fill: #c8c8c8; }
.time { fill: #f4f4f4; stroke: #000; stroke-width: 2; }
.time-t { font: 12.500px "Liberation Sans", sans-serif; fill: #111; }
.sc-w { fill: #fff; stroke: #000; }
.sc-b { fill: #000; }
.sc-t { font: 12.500px "Liberation Sans", sans-serif; fill: #222; }
.cursor { fill: #fff; stroke: #111; stroke-width: 1; }

.hatch { height: 31px; background: repeating-conic-gradient(#666a70 0 25%, #a4a6ac 0 50%) 0 0 / 3px 3px; }
.status { height: 33px; display: flex; justify-content: flex-end; background: #cdd3da; border-bottom: 2px solid #c4e8cc; }
.show { width: 103px; height: 28px; margin-top: 3px; display: flex; align-items: center; gap: 9px; padding-left: 8px; background: #e3e5e9; border-left: 1px solid #b8bcc2; border-top: 1px solid #d4d6da; font-family: "Liberation Serif", serif; font-size: 16.500px; white-space: nowrap; word-spacing: 3px; color: #333; overflow: hidden; }
.info { width: 12px; height: 12px; flex: none; display: block; }
```
